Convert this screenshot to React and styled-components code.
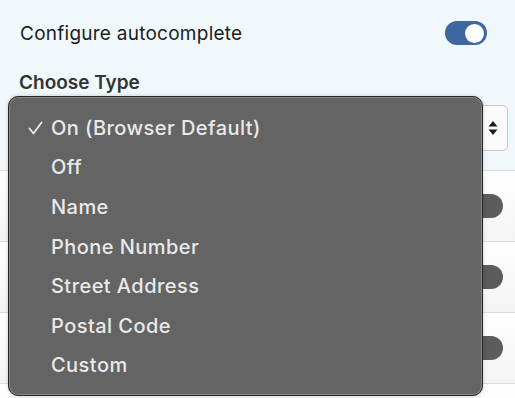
import React from "react";
import styled, { createGlobalStyle } from "styled-components";

const Global = createGlobalStyle`
  html, body { margin: 0; padding: 0; background: #ffffff; }
  body { font-family: Inter, "Noto Sans", sans-serif; -webkit-font-smoothing: antialiased; }
`;

const Page = styled.div`
  position: relative;
  width: 515px;
  height: 398px;
  overflow: hidden;
  background: #ffffff;
`;

const Header = styled.section`
  background: #f0f8fc;
  height: 170px;
  padding: 21px 28px 0 20px;
  box-sizing: border-box;
  display: flex;
  flex-direction: column;
`;

const SettingRow = styled.div`
  display: flex;
  align-items: center;
  justify-content: space-between;
  height: 24px;
`;

const SettingLabel = styled.span`
  font-size: 19px;
  color: #1c1c1c;
  letter-spacing: 0.25px;
`;

const Toggle = styled.div`
  width: 42px;
  height: 24px;
  border-radius: 12px;
  background: ${(p) => (p.$on ? "#3e66a0" : "#5c5c5c")};
  display: flex;
  align-items: center;
  justify-content: ${(p) => (p.$on ? "flex-end" : "flex-start")};
  padding: 0 3px;
  box-sizing: border-box;
  flex-shrink: 0;
`;

const Knob = styled.div`
  width: 19px;
  height: 19px;
  border-radius: 50%;
  background: #ffffff;
`;

const FieldLabel = styled.div`
  margin-top: 26px;
  font-size: 19px;
  font-weight: 600;
  color: #333333;
  margin-left: -1px;
`;

const SelectBox = styled.div`
  margin-top: 11px;
  margin-left: -8px;
  margin-right: -21px;
  height: 46px;
  box-sizing: border-box;
  border: 1.5px solid #c9c9c9;
  border-radius: 5px;
  background: #fbfbfb;
  display: flex;
  align-items: center;
  justify-content: flex-end;
  padding-right: 9px;
`;

const List = styled.div`
  display: flex;
  flex-direction: column;
`;

const ListRow = styled.div`
  height: 71px;
  box-sizing: border-box;
  border-top: 1.5px solid #dcdcdc;
  background: linear-gradient(180deg, #ffffff, #f4f4f4);
  display: flex;
  align-items: center;
  justify-content: flex-end;
  padding-right: 12px;
`;

const Menu = styled.div`
  position: absolute;
  left: 8px;
  top: 96px;
  width: 475px;
  height: 300px;
  box-sizing: border-box;
  background: #646464;
  border: 1px solid #262626;
  border-radius: 10px;
  box-shadow: inset 0 0 0 1px #8a8a8a, 0 0 4px rgba(0, 0, 0, 0.18);
  padding: 11px 0 10px 0;
  display: flex;
  flex-direction: column;
`;

const Item = styled.div`
  height: 40px;
  display: flex;
  align-items: center;
  font-size: 20px;
  font-weight: 500;
  color: #e9e9e9;
  letter-spacing: 0.45px;
`;

const CheckSlot = styled.span`
  width: 42px;
  display: flex;
  justify-content: flex-end;
  padding-right: 8px;
  box-sizing: border-box;
`;

const items = [
  "On (Browser Default)",
  "Off",
  "Name",
  "Phone Number",
  "Street Address",
  "Postal Code",
  "Custom",
];

export default function App() {
  return (
    <Page>
      <Global />
      <Header>
        <SettingRow>
          <SettingLabel>Configure autocomplete</SettingLabel>
          <Toggle $on>
            <Knob />
          </Toggle>
        </SettingRow>
        <FieldLabel>Choose Type</FieldLabel>
        <SelectBox>
          <svg width="10" height="16" viewBox="0 0 10 16">
            <path d="M5 1 L9.5 6.5 H0.5 Z" fill="#1a1a1a" />
            <path d="M5 15 L9.5 9.5 H0.5 Z" fill="#1a1a1a" />
          </svg>
        </SelectBox>
      </Header>
      <List>
        {[0, 1, 2, 3].map((i) => (
          <ListRow key={i}>
            <Toggle>
              <Knob />
            </Toggle>
          </ListRow>
        ))}
      </List>
      <Menu>
        {items.map((t, i) => (
          <Item key={t}>
            <CheckSlot>
              {i === 0 && (
                <svg width="15" height="14" viewBox="0 0 15 14">
                  <path
                    d="M1.5 7.5 L5.5 12.5 L13.5 1.5"
                    fill="none"
                    stroke="#e9e9e9"
                    strokeWidth="1.8"
                    strokeLinecap="round"
                    strokeLinejoin="round"
                  />
                </svg>
              )}
            </CheckSlot>
            {t}
          </Item>
        ))}
      </Menu>
    </Page>
  );
}
